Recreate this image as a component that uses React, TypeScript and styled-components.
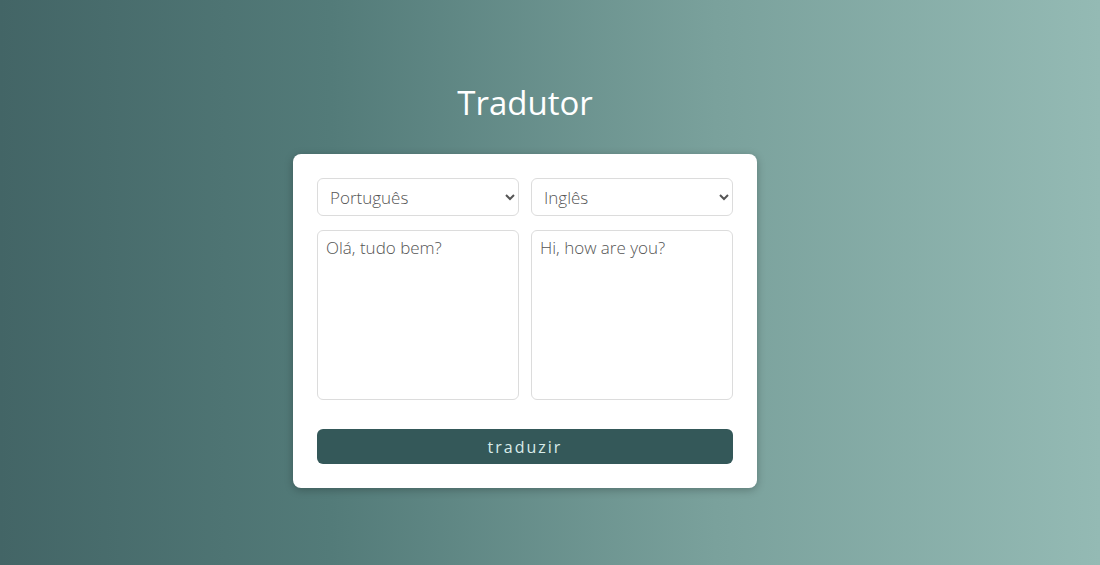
import styled, { createGlobalStyle } from "styled-components"
import { useState } from "react"

const GlobalStyle = createGlobalStyle`
  * {
    box-sizing: border-box;
  }

  html, body {
    margin: 0;
    height: 100%;
  }

  body {
    font-family: "Open Sans", "Noto Sans", sans-serif;
    background: linear-gradient(90deg, #436566 0%, #537b79 30%, #7aa19c 65%, #94bab4 100%);
    min-height: 565px;
  }
`

const Page = styled.main`
  display: flex;
  flex-direction: column;
  align-items: center;
  padding: 80px 50px 0 0;
`

const Title = styled.h1`
  margin: 0 0 28px;
  font-size: 33px;
  font-weight: 400;
  line-height: 46px;
  color: #ffffff;
`

const Card = styled.section`
  width: 464px;
  padding: 24px;
  background: #ffffff;
  border-radius: 8px;
  box-shadow: 0 2px 8px rgba(0, 0, 0, 0.25);
`

const Grid = styled.div`
  display: grid;
  grid-template-columns: 1fr 1fr;
  column-gap: 12px;
  row-gap: 14px;
`

const Select = styled.select`
  height: 38px;
  padding: 0 8px;
  font-family: inherit;
  font-size: 17px;
  font-weight: 300;
  color: #555;
  background: #fff;
  border: 1px solid #dcdcdc;
  border-radius: 6px;
  outline: none;
`

const TextArea = styled.textarea`
  height: 170px;
  padding: 6px 8px;
  font-family: inherit;
  font-size: 17px;
  font-weight: 300;
  line-height: 22px;
  color: #555;
  border: 1px solid #dcdcdc;
  border-radius: 6px;
  resize: none;
  outline: none;
`

const Button = styled.button`
  display: block;
  width: 100%;
  height: 35px;
  margin-top: 29px;
  font-family: inherit;
  font-size: 16px;
  font-weight: 400;
  letter-spacing: 2px;
  color: #d9ecea;
  background: #345859;
  border: none;
  border-radius: 6px;
  cursor: pointer;
`

const languages = ["Português", "Inglês", "Espanhol", "Francês", "Alemão"]

export default function App() {
  const [from, setFrom] = useState("Português")
  const [to, setTo] = useState("Inglês")
  const [source, setSource] = useState("Olá, tudo bem?")
  const [target, setTarget] = useState("Hi, how are you?")

  return (
    <>
      <GlobalStyle />
      <Page>
        <Title>Tradutor</Title>
        <Card>
          <Grid>
            <Select value={from} onChange={(e) => setFrom(e.target.value)}>
              {languages.map((l) => <option key={l}>{l}</option>)}
            </Select>
            <Select value={to} onChange={(e) => setTo(e.target.value)}>
              {languages.map((l) => <option key={l}>{l}</option>)}
            </Select>
            <TextArea value={source} onChange={(e) => setSource(e.target.value)} />
            <TextArea value={target} onChange={(e) => setTarget(e.target.value)} />
          </Grid>
          <Button>traduzir</Button>
        </Card>
      </Page>
    </>
  )
}
